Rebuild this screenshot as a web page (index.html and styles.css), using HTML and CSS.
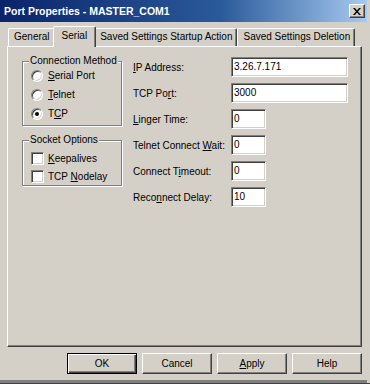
FILE: index.html
```html
<!DOCTYPE html>
<html lang="en">
<head>
    <meta charset="UTF-8">
    <title>Port Properties - MASTER_COM1</title>
    <link rel="stylesheet" href="styles.css">
</head>
<body>
    <div class="window">
        <div class="titlebar">
            <span class="title">Port Properties - MASTER_COM1</span>
            <span class="close">
                <svg width="8" height="7" viewBox="0 0 8 7"><path d="M0 0h2l2 2.5L6 0h2L5 3.5 8 7H6L4 4.5 2 7H0l3-3.5z" fill="#000"/></svg>
            </span>
        </div>

        <div class="frame">
            <div class="tabs">
                <div class="tab">General</div>
                <div class="tab active">Serial</div>
                <div class="tab">Saved Settings Startup Action</div>
                <div class="tab">Saved Settings Deletion</div>
            </div>

            <div class="panel">
                <div class="left">
                    <div class="group group-conn">
                        <span class="legend">Connection Method</span>
                        <div class="opt"><span class="radio"></span><span><u>S</u>erial Port</span></div>
                        <div class="opt"><span class="radio"></span><span><u>T</u>elnet</span></div>
                        <div class="opt"><span class="radio checked"></span><span>T<u>C</u>P</span></div>
                    </div>
                    <div class="group group-sock">
                        <span class="legend">Socket Options</span>
                        <div class="opt opt-check"><span class="check"></span><span><u>K</u>eepalives</span></div>
                        <div class="opt opt-check"><span class="check"></span><span>TCP <u>N</u>odelay</span></div>
                    </div>
                </div>

                <div class="fields">
                    <label><u>I</u>P Address:</label>
                    <div class="input wide">3.26.7.171</div>
                    <label>TCP Po<u>r</u>t:</label>
                    <div class="input wide">3000</div>
                    <label><u>L</u>inger Time:</label>
                    <div class="input">0</div>
                    <label>Telnet Connect <u>W</u>ait:</label>
                    <div class="input">0</div>
                    <label>Connect T<u>i</u>meout:</label>
                    <div class="input">0</div>
                    <label>Reco<u>n</u>nect Delay:</label>
                    <div class="input">10</div>
                </div>
            </div>

            <div class="buttons">
                <button class="default">OK</button>
                <button>Cancel</button>
                <button><u>A</u>pply</button>
                <button>Help</button>
            </div>
        </div>
    </div>
</body>
</html>
```

FILE: styles.css
```css
body {
    margin: 0;
    font-family: "Liberation Sans", Arial, sans-serif;
    font-size: 10px;
    color: #000;
    background-color: #d4d0c8;
}

.window {
    width: 370px;
    height: 384px;
    box-sizing: border-box;
    padding-right: 3px;
    background-color: #d4d0c8;
    border-bottom: 1px solid #404040;
}

.titlebar {
    height: 22px;
    display: flex;
    align-items: center;
    justify-content: space-between;
    padding: 0 2px 0 4px;
    background: linear-gradient(to right, #0a246a, #2a5a9a 60%, #a6caf0);
}

.title {
    color: #fff;
    font-weight: bold;
    font-size: 10.5px;
}

.close {
    width: 16px;
    height: 14px;
    box-sizing: border-box;
    display: flex;
    align-items: center;
    justify-content: center;
    background-color: #d4d0c8;
    border: 1px solid;
    border-color: #fff #404040 #404040 #fff;
    box-shadow: inset -1px -1px 0 #808080;
}

.frame {
    height: 361px;
    box-sizing: border-box;
    padding: 0 5px 0 7px;
    border-bottom: 3px solid #808080;
}

.tabs {
    height: 24px;
    display: flex;
    align-items: flex-end;
    padding-left: 1px;
}

.tab {
    height: 18px;
    box-sizing: border-box;
    padding: 0 4px 0 5px;
    line-height: 16px;
    border: 1px solid;
    border-bottom: none;
    border-color: #fff #404040 transparent #fff;
    border-radius: 2px 2px 0 0;
    box-shadow: inset -1px 0 0 #808080;
    white-space: nowrap;
}

.tab.active {
    height: 21px;
    margin: 0 -2px -1px;
    padding: 0 8px;
    line-height: 17px;
    background-color: #d4d0c8;
    position: relative;
    z-index: 1;
}

.panel {
    height: 301px;
    box-sizing: border-box;
    display: flex;
    gap: 11px;
    padding: 10px 0 0 14px;
    border: 1px solid;
    border-color: #fff #404040 #404040 #fff;
    box-shadow: inset -1px -1px 0 #808080;
}

.left {
    width: 100px;
    padding-top: 4px;
    display: flex;
    flex-direction: column;
    gap: 14px;
}

.group {
    position: relative;
    border: 1px solid #808080;
    box-shadow: inset 1px 1px 0 #fff, 1px 1px 0 #fff;
    padding: 4px 0 2px 8px;
}

.group-sock {
    padding-top: 8px;
    padding-bottom: 0;
}

.legend {
    position: absolute;
    top: -7px;
    left: 6px;
    padding: 0 1px;
    line-height: 12px;
    background-color: #d4d0c8;
}

.opt {
    height: 19px;
    display: flex;
    align-items: center;
    gap: 5px;
}

.opt-check {
    height: 18px;
    gap: 4px;
}

.radio {
    width: 12px;
    height: 12px;
    box-sizing: border-box;
    border-radius: 50%;
    background-color: #fff;
    border: 1px solid;
    border-color: #808080 #fff #fff #808080;
    box-shadow: inset 1px 1px 0 #404040, inset -1px -1px 0 #d4d0c8;
    display: flex;
    align-items: center;
    justify-content: center;
}

.radio.checked::after {
    content: "";
    width: 4px;
    height: 4px;
    border-radius: 50%;
    background-color: #000;
}

.check {
    width: 13px;
    height: 13px;
    box-sizing: border-box;
    background-color: #fff;
    border: 1px solid;
    border-color: #808080 #fff #fff #808080;
    box-shadow: inset 1px 1px 0 #404040, inset -1px -1px 0 #d4d0c8;
}

.fields {
    display: grid;
    grid-template-columns: 98px auto;
    grid-auto-rows: 20px;
    row-gap: 6px;
    align-items: center;
    align-content: start;
}

.fields label {
    white-space: nowrap;
}

.input {
    width: 35px;
    height: 20px;
    box-sizing: border-box;
    padding: 2px 0 0 2px;
    line-height: 14px;
    background-color: #fff;
    border: 1px solid;
    border-color: #808080 #fff #fff #808080;
    box-shadow: inset 1px 1px 0 #404040, inset -1px -1px 0 #d4d0c8;
}

.input.wide {
    width: 117px;
}

.buttons {
    display: flex;
    justify-content: flex-end;
    gap: 5px;
    margin-top: 6px;
}

button {
    width: 70px;
    height: 21px;
    padding: 0;
    font-family: "Liberation Sans", Arial, sans-serif;
    font-size: 10px;
    color: #000;
    background-color: #d4d0c8;
    border: 1px solid;
    border-color: #fff #404040 #404040 #fff;
    box-shadow: inset -1px -1px 0 #808080;
}

button.default {
    border: 1px solid #000;
    box-shadow: inset 1px 1px 0 #fff, inset -1px -1px 0 #404040, inset -2px -2px 0 #808080;
}
```
